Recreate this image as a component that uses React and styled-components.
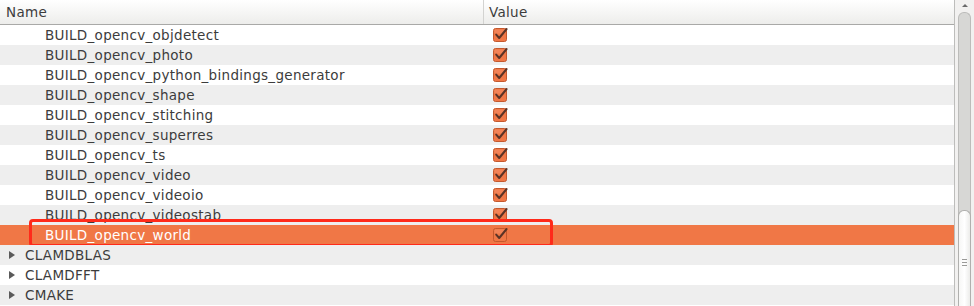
import React from "react";
import styled, { createGlobalStyle } from "styled-components";

const Global = createGlobalStyle`
  html, body { margin: 0; padding: 0; background: #ffffff; }
  body { width: 974px; height: 306px; overflow: hidden; }
`;

const Frame = styled.div`
  display: flex;
  width: 974px;
  height: 306px;
  overflow: hidden;
  font-family: "DejaVu Sans", "Noto Sans", sans-serif;
  font-size: 13.5px;
  letter-spacing: 0.3px;
  color: #3c3c3c;
`;

const Table = styled.div`
  width: 954px;
  display: flex;
  flex-direction: column;
`;

const Header = styled.div`
  display: grid;
  grid-template-columns: 483px 1fr;
  height: 24px;
  border-bottom: 1px solid #a9a9a7;
  background: linear-gradient(#ffffff, #ededeb);
`;

const HeaderCell = styled.div`
  display: flex;
  align-items: center;
  padding-left: ${(p) => p.$pad}px;
  border-left: ${(p) => (p.$divider ? "1px solid #d3d3d1" : "none")};
  color: #3c3c3c;
`;

const Row = styled.div`
  position: relative;
  display: grid;
  grid-template-columns: 484px 1fr;
  height: 20px;
  background: ${(p) => (p.$selected ? "#f07746" : p.$odd ? "#eeeeee" : "#ffffff")};
  color: ${(p) => (p.$selected ? "#ffffff" : "#3c3c3c")};
`;

const NameCell = styled.div`
  display: flex;
  align-items: center;
  padding-left: ${(p) => (p.$child ? 45 : 9)}px;
  white-space: nowrap;
`;

const Expander = styled.span`
  width: 0;
  height: 0;
  border-top: 4px solid transparent;
  border-bottom: 4px solid transparent;
  border-left: 6px solid #5a5a5a;
  margin-right: 10px;
`;

const ValueCell = styled.div`
  display: flex;
  align-items: center;
  padding-left: 9px;
`;

const Highlight = styled.div`
  position: absolute;
  left: 29px;
  top: -6px;
  width: 518px;
  height: 22px;
  border: 3px solid #ff2a1a;
  border-radius: 4px;
  pointer-events: none;
`;

const Scrollbar = styled.div`
  position: relative;
  width: 20px;
  background: #f2f1f0;
  border-left: 1px solid #bdbdbb;
  box-sizing: border-box;
  display: flex;
  flex-direction: column;
  align-items: center;
`;

const UpArrow = styled.div`
  margin-top: 4px;
  width: 0;
  height: 0;
  border-left: 3px solid transparent;
  border-right: 3px solid transparent;
  border-bottom: 3px solid #6a6a6a;
`;

const Trough = styled.div`
  margin-top: 5px;
  width: 13px;
  flex: 1;
  display: flex;
  flex-direction: column;
  background: #d7d7d5;
  border: 1px solid #bcbcba;
  border-bottom: none;
  border-radius: 6px 6px 0 0;
  box-sizing: border-box;
`;

const Gap = styled.div`
  height: 197px;
`;

const Thumb = styled.div`
  flex: 1;
  margin: 0 -1px;
  background: linear-gradient(90deg, #f6f6f5, #ffffff 50%, #ececea);
  border: 1px solid #b0b0ae;
  border-bottom: none;
  border-radius: 6px 6px 0 0;
  display: flex;
  flex-direction: column;
  align-items: center;
  padding-top: 48px;
  gap: 2px;
`;

const GripLine = styled.div`
  width: 5px;
  height: 1px;
  background: #9a9a98;
`;

function Check() {
  return (
    <svg width="16" height="16" viewBox="0 0 16 16">
      <rect x="0.5" y="1.5" width="13" height="13" rx="2" fill="#f07746" stroke="#c4582d" />
      <rect x="1.5" y="2.5" width="11" height="4" rx="1" fill="#f48c62" opacity="0.6" />
      <path d="M3.2 7.6 L6.2 11 L13.6 2" fill="none" stroke="#5b3326" strokeWidth="2" strokeLinecap="round" strokeLinejoin="round" />
    </svg>
  );
}

const children = [
  "BUILD_opencv_objdetect",
  "BUILD_opencv_photo",
  "BUILD_opencv_python_bindings_generator",
  "BUILD_opencv_shape",
  "BUILD_opencv_stitching",
  "BUILD_opencv_superres",
  "BUILD_opencv_ts",
  "BUILD_opencv_video",
  "BUILD_opencv_videoio",
  "BUILD_opencv_videostab",
  "BUILD_opencv_world",
];

const groups = ["CLAMDBLAS", "CLAMDFFT", "CMAKE"];

export default function App() {
  const rows = [
    ...children.map((n) => ({ name: n, child: true })),
    ...groups.map((n) => ({ name: n, child: false })),
  ];
  return (
    <>
      <Global />
      <Frame>
        <Table>
          <Header>
            <HeaderCell $pad={6}>Name</HeaderCell>
            <HeaderCell $pad={5} $divider>Value</HeaderCell>
          </Header>
          {rows.map((r, i) => {
            const selected = r.name === "BUILD_opencv_world";
            return (
              <Row key={r.name} $odd={i % 2 === 1} $selected={selected}>
                <NameCell $child={r.child}>
                  {!r.child && <Expander />}
                  {r.name}
                </NameCell>
                <ValueCell>{r.child && <Check />}</ValueCell>
                {selected && <Highlight />}
              </Row>
            );
          })}
        </Table>
        <Scrollbar>
          <UpArrow />
          <Trough>
            <Gap />
            <Thumb>
              <GripLine />
              <GripLine />
              <GripLine />
            </Thumb>
          </Trough>
        </Scrollbar>
      </Frame>
    </>
  );
}
